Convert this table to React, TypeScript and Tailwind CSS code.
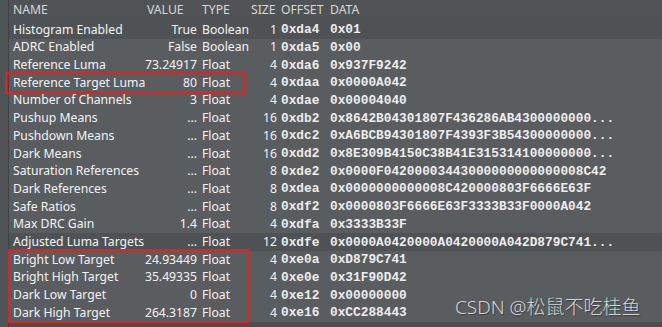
import React from "react";

type Row = {
  name: string;
  value: string;
  type: string;
  size: string;
  offset: string;
  data: string;
  dark?: boolean;
};

const rows: Row[] = [
  { name: "Histogram Enabled", value: "True", type: "Boolean", size: "1", offset: "0xda4", data: "0x01", dark: true },
  { name: "ADRC Enabled", value: "False", type: "Boolean", size: "1", offset: "0xda5", data: "0x00" },
  { name: "Reference Luma", value: "73.24917", type: "Float", size: "4", offset: "0xda6", data: "0x937F9242" },
  { name: "Reference Target Luma", value: "80", type: "Float", size: "4", offset: "0xdaa", data: "0x0000A042" },
  { name: "Number of Channels", value: "3", type: "Float", size: "4", offset: "0xdae", data: "0x00004040" },
  { name: "Pushup Means", value: "...", type: "Float", size: "16", offset: "0xdb2", data: "0x8642B04301807F436286AB4300000000..." },
  { name: "Pushdown Means", value: "...", type: "Float", size: "16", offset: "0xdc2", data: "0xA6BCB94301807F4393F3B54300000000..." },
  { name: "Dark Means", value: "...", type: "Float", size: "16", offset: "0xdd2", data: "0x8E309B4150C38B41E315314100000000..." },
  { name: "Saturation References", value: "...", type: "Float", size: "8", offset: "0xde2", data: "0x0000F04200003443000000000000008C42" },
  { name: "Dark References", value: "...", type: "Float", size: "8", offset: "0xdea", data: "0x0000000000008C420000803F6666E63F" },
  { name: "Safe Ratios", value: "...", type: "Float", size: "8", offset: "0xdf2", data: "0x0000803F6666E63F3333B33F0000A042" },
  { name: "Max DRC Gain", value: "1.4", type: "Float", size: "4", offset: "0xdfa", data: "0x3333B33F" },
  { name: "Adjusted Luma Targets", value: "...", type: "Float", size: "12", offset: "0xdfe", data: "0x0000A0420000A0420000A042D879C741...", dark: true },
  { name: "Bright Low Target", value: "24.93449", type: "Float", size: "4", offset: "0xe0a", data: "0xD879C741" },
  { name: "Bright High Target", value: "35.49335", type: "Float", size: "4", offset: "0xe0e", data: "0x31F90D42" },
  { name: "Dark Low Target", value: "0", type: "Float", size: "4", offset: "0xe12", data: "0x00000000" },
  { name: "Dark High Target", value: "264.3187", type: "Float", size: "4", offset: "0xe16", data: "0xCC288443" },
];

const sans = "font-['Noto_Sans','Open_Sans',sans-serif]";
const mono = "font-['Liberation_Mono',monospace] font-bold";

function DataRow({ r }: { r: Row }) {
  return (
    <div className={`flex h-[17.7px] items-center whitespace-nowrap text-[12.2px] text-[#f4f4f4] ${r.dark ? "bg-[#4f5254]" : ""}`}>
      <div className={`w-[130px] pl-[4px] ${sans}`}>{r.name}</div>
      <div className={`w-[58px] text-right ${sans}`}>{r.value}</div>
      <div className={`w-[50px] pl-[5px] ${sans}`}>{r.type}</div>
      <div className={`w-[30px] text-right ${sans}`}>{r.size}</div>
      <div className={`w-[53px] pl-[4px] text-[12.8px] text-[#eeeeee] ${mono}`}>{r.offset}</div>
      <div className={`flex-1 text-[12.8px] text-[#eeeeee] ${mono}`}>{r.data}</div>
    </div>
  );
}

export default function App() {
  return (
    <div className="relative flex h-[327px] w-[662px] overflow-hidden bg-[#4b4e51]">
      {/* left gutter */}
      <div className="w-[9px] border-r border-[#3f4244] bg-[#505356]" />
      <div className="flex flex-1 flex-col">
        <div className="h-[322px] bg-[#5a5d60]">
          <div className={`flex h-[21px] items-center whitespace-nowrap bg-[#505355] text-[12.2px] text-[#d8d8d8] ${sans}`}>
            <div className="w-[138px] pl-[4px]">NAME</div>
            <div className="w-[55px]">VALUE</div>
            <div className="w-[49px]">TYPE</div>
            <div className="w-[30px]">SIZE</div>
            <div className="w-[49px]">OFFSET</div>
            <div className="flex-1">DATA</div>
          </div>
          {rows.map((r) => (
            <DataRow key={r.name} r={r} />
          ))}
        </div>
      </div>

      {/* red highlight boxes */}
      <div className="pointer-events-none absolute left-[5px] top-[72px] h-[22px] w-[241px] border-2 border-[#e3221f]" />
      <div className="pointer-events-none absolute left-[8px] top-[249px] h-[74px] w-[241px] border-2 border-[#e3221f]" />

      {/* watermark */}
      <div className="pointer-events-none absolute left-[455px] top-[295px] whitespace-nowrap font-['Noto_Sans','Noto_Sans_CJK_SC',sans-serif] text-[19px] leading-[24px] font-light text-[#d4d4d4] [text-shadow:1px_1px_1px_rgba(0,0,0,0.35)]">
        CSDN @松鼠不吃桂鱼
      </div>
    </div>
  );
}
